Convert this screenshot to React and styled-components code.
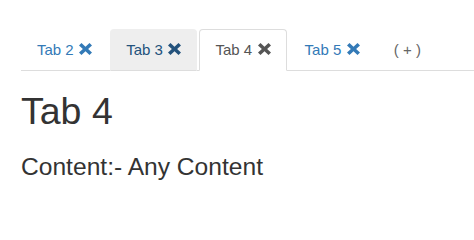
import React, { useState } from 'react';
import styled, { createGlobalStyle } from 'styled-components';

const GlobalStyle = createGlobalStyle`
  body {
    margin: 0;
    background: #fff;
    font-family: "Liberation Sans", Arial, sans-serif;
    font-size: 14px;
    line-height: 1.42857;
    color: #333;
  }
`;

const Page = styled.div`
  padding: 29px 0 0 21px;
`;

const TabList = styled.ul`
  display: flex;
  margin: 0;
  padding: 0;
  list-style: none;
  border-bottom: 1px solid #ddd;
`;

const TabItem = styled.li`
  margin-right: 2px;
  margin-bottom: -1px;
`;

const TabLink = styled.a`
  display: flex;
  align-items: center;
  padding: 10px 15px;
  font-size: 15px;
  line-height: 20px;
  border: 1px solid transparent;
  border-radius: 4px 4px 0 0;
  text-decoration: none;
  cursor: pointer;
  color: ${(p) => (p.$active ? '#555' : p.$hover ? '#23527c' : '#337ab7')};
  background: ${(p) => (p.$active ? '#fff' : p.$hover ? '#eee' : 'transparent')};
  border-color: ${(p) =>
    p.$active ? '#ddd #ddd transparent' : p.$hover ? '#eee #eee #ddd' : 'transparent'};
`;

const AddLink = styled(TabLink)`
  color: #666;
  white-space: pre;
`;

const CloseIcon = styled.svg`
  width: 13px;
  height: 12px;
  margin-left: 5.5px;
  margin-top: -3px;
  fill: currentColor;
`;

const Panel = styled.div`
  padding-right: 21px;
`;

const Title = styled.h1`
  margin: 20px 0 10px;
  font-size: 37.5px;
  font-weight: 500;
  line-height: 1.1;
`;

const Body = styled.h3`
  margin: 21px 0 10px;
  font-size: 24.6px;
  font-weight: 500;
  line-height: 1.1;
`;

function Close() {
  return (
    <CloseIcon viewBox="0 0 12 11">
      <path d="M2.3 0 L6 3.4 L9.7 0 L12 2.2 L8.4 5.5 L12 8.8 L9.7 11 L6 7.6 L2.3 11 L0 8.8 L3.6 5.5 L0 2.2 Z" />
    </CloseIcon>
  );
}

const tabs = ['Tab 2', 'Tab 3', 'Tab 4', 'Tab 5'];

export default function App() {
  const [active, setActive] = useState('Tab 4');
  const hover = 'Tab 3';

  return (
    <>
      <GlobalStyle />
      <Page>
        <TabList>
          {tabs.map((t) => (
            <TabItem key={t}>
              <TabLink
                $active={t === active}
                $hover={t === hover && t !== active}
                onClick={() => setActive(t)}
              >
                {t}
                <Close />
              </TabLink>
            </TabItem>
          ))}
          <TabItem>
            <AddLink>{'( + )'}</AddLink>
          </TabItem>
        </TabList>
        <Panel>
          <Title>{active}</Title>
          <Body>Content:- Any Content</Body>
        </Panel>
      </Page>
    </>
  );
}
